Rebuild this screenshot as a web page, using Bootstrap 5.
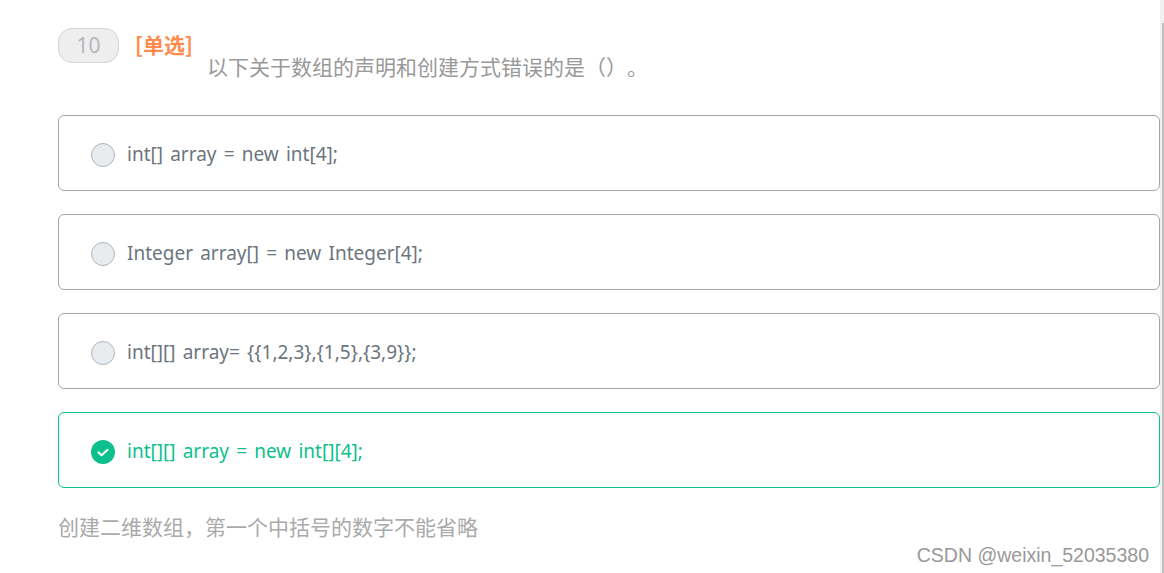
<!DOCTYPE html>
<html lang="zh-CN">

<head>
    <meta charset="UTF-8">
    <meta name="viewport" content="width=device-width, initial-scale=1.0">
    <title>单选题</title>
    <link rel="stylesheet" href="https://cdn.jsdelivr.net/npm/bootstrap@5.3.2/dist/css/bootstrap.min.css">
    <style>
        html, body { height: 573px; overflow: hidden; background: #fff; }
        body { font-family: "Noto Sans CJK SC", sans-serif; }
        .quiz-page { padding: 28px 4px 0 58px; position: relative; height: 573px; }
        .quiz-head { height: 87px; }
        .quiz-num { width: 61px; height: 35px; border: 1px solid #d4d4d4; border-radius: 14px; background: #eee; color: #b9b4bc; font-size: 21px; font-family: "Noto Sans", sans-serif; }
        .quiz-type { margin: -1px 0 0 16px; color: #ff8b4d; font-size: 21px; font-weight: 700; line-height: 34px; }
        .quiz-title { margin: 23px 0 0 14px; color: #999; font-size: 21px; line-height: 30px; text-spacing-trim: space-all; font-feature-settings: "halt" 0, "chws" 0; }
        .quiz-opts { gap: 23px; }
        .quiz-opt { height: 76px; padding: 1px 0 0 32px; border: 1px solid #a5a5a5; border-radius: 6px; color: #6c757d; font-size: 19px; word-spacing: 2.25px; line-height: 30px; font-family: "Noto Sans", sans-serif; }
        .quiz-opt.picked { border-color: #0dbf8c; color: #0dbf8c; }
        .quiz-dot { width: 24px; height: 24px; margin: 3px 12px 0 0; border: 1px solid #adb5bd; border-radius: 50%; background: #e9ecef; }
        .quiz-tick { width: 24px; height: 24px; margin: 3px 12px 0 0; }
        .quiz-note { margin-top: 23px; color: #aaa; font-size: 21px; line-height: 30px; }
        .quiz-mark { position: absolute; right: 15px; bottom: 6px; color: #999; font-size: 19.5px; line-height: 24px; font-family: "Liberation Sans", sans-serif; }
        .quiz-track { position: absolute; top: 0; right: 0; width: 4px; height: 573px; background: #f1f1f1; }
        .quiz-thumb { position: absolute; top: 23px; right: 0; width: 2px; height: 550px; background: #c1c1c1; }
    </style>
</head>

<body>
    <div class="quiz-page">
        <div class="quiz-head d-flex align-items-start">
            <div class="quiz-num d-flex align-items-center justify-content-center">10</div>
            <div class="quiz-type">[单选]</div>
            <div class="quiz-title">以下关于数组的声明和创建方式错误的是（）。</div>
        </div>

        <div class="quiz-opts d-flex flex-column">
            <div class="quiz-opt d-flex align-items-center"><span class="quiz-dot"></span>int[] array = new int[4];</div>
            <div class="quiz-opt d-flex align-items-center"><span class="quiz-dot"></span>Integer array[] = new Integer[4];</div>
            <div class="quiz-opt d-flex align-items-center"><span class="quiz-dot"></span>int[][] array= {{1,2,3},{1,5},{3,9}};</div>
            <div class="quiz-opt picked d-flex align-items-center">
                <svg class="quiz-tick" viewBox="0 0 24 24"><circle cx="12" cy="12" r="12" fill="#0dbf8c"/><path d="M7.5 12.4l3.1 2.9 5.9-5.6" fill="none" stroke="#fff" stroke-width="2" stroke-linecap="round" stroke-linejoin="round"/></svg>
                int[][] array = new int[][4];
            </div>
        </div>

        <div class="quiz-note">创建二维数组，第一个中括号的数字不能省略</div>
        <div class="quiz-mark">CSDN @weixin_52035380</div>
        <div class="quiz-track"></div>
        <div class="quiz-thumb"></div>
    </div>
</body>

</html>
